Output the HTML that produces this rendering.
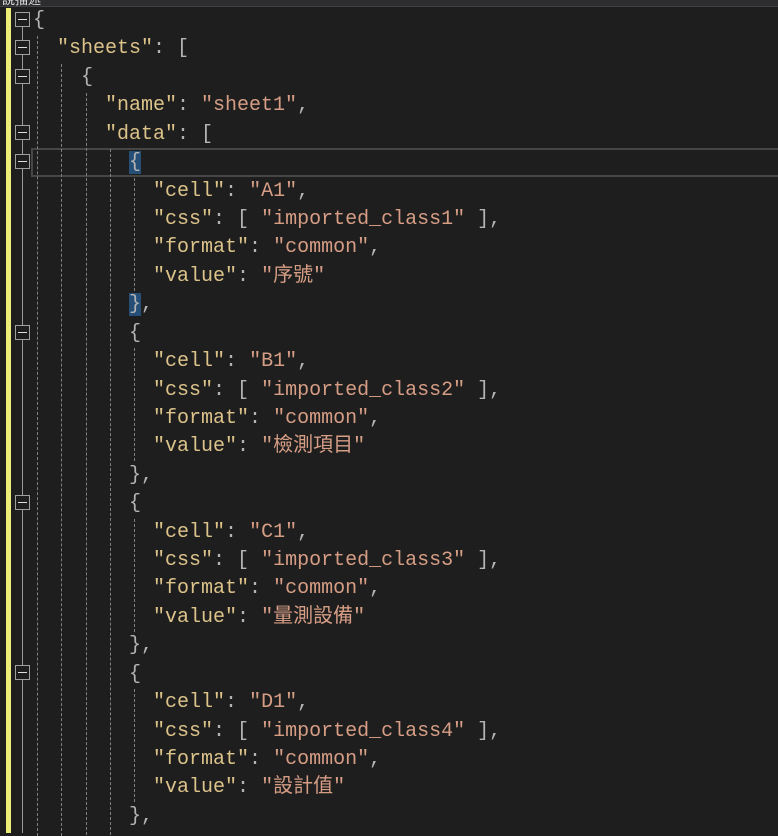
<!DOCTYPE html>
<html><head><meta charset="utf-8"><style>
body{margin:0;width:778px;height:833px;background:#1e1e1e;overflow:hidden;position:relative;font-family:"Liberation Mono","Noto Sans CJK TC",monospace;}
.top{position:absolute;left:0;top:0;width:778px;height:6px;background:#2d2d30;border-bottom:1px solid #3f3f46;overflow:hidden}
.top span{position:absolute;left:2px;top:-11px;color:#ddd;font-size:13px;font-family:"Liberation Sans","Noto Sans CJK TC",sans-serif}
.bar{position:absolute;left:6px;top:8px;width:5px;height:825px;background:#eded7a}
.ln{position:absolute;left:33px;height:28.42px;line-height:28.42px;font-size:20px;white-space:pre;color:#b4b4b4}
.k{color:#dcc38a}.s{color:#d69d85}.b{background:#264f78}
.fold{position:absolute;left:15px;width:13px;height:13px;border:1px solid #a0a0a0;background:#1e1e1e}
.fold:after{content:"";position:absolute;left:2px;top:6px;width:9px;height:1px;background:#ddd}
.vl{position:absolute;left:22px;width:1px;background:#999;top:14px;height:819px}
.g{position:absolute;width:0;border-left:1px dashed #808080}
.cur{position:absolute;left:31px;top:148px;width:760px;height:25px;border:2px solid #464646}
</style></head><body>
<div class="top"><span>說描述</span></div>
<div class="bar"></div>
<div class="vl"></div>
<div class="cur"></div>
<div class="g" style="left:37px;top:36px;height:800px"></div>
<div class="g" style="left:61px;top:64px;height:772px"></div>
<div class="g" style="left:86px;top:93px;height:742px"></div>
<div class="g" style="left:110px;top:149px;height:686px"></div>
<div class="g" style="left:134px;top:178px;height:113px"></div>
<div class="g" style="left:134px;top:348px;height:113px"></div>
<div class="g" style="left:134px;top:519px;height:113px"></div>
<div class="g" style="left:134px;top:689px;height:113px"></div>
<div class="fold" style="top:12px"></div>
<div class="fold" style="top:40px"></div>
<div class="fold" style="top:69px"></div>
<div class="fold" style="top:125px"></div>
<div class="fold" style="top:154px"></div>
<div class="fold" style="top:325px"></div>
<div class="fold" style="top:495px"></div>
<div class="fold" style="top:665px"></div>
<div class="ln" style="top:7px">{</div>
<div class="ln" style="top:35.4px">  <span class="k">"sheets"</span>: [</div>
<div class="ln" style="top:63.8px">    {</div>
<div class="ln" style="top:92.3px">      <span class="k">"name"</span>: <span class="s">"sheet1"</span>,</div>
<div class="ln" style="top:120.7px">      <span class="k">"data"</span>: [</div>
<div class="ln" style="top:149.1px">        <span class="b">{</span></div>
<div class="ln" style="top:177.5px">          <span class="k">"cell"</span>: <span class="s">"A1"</span>,</div>
<div class="ln" style="top:205.9px">          <span class="k">"css"</span>: [ <span class="s">"imported_class1"</span> ],</div>
<div class="ln" style="top:234.4px">          <span class="k">"format"</span>: <span class="s">"common"</span>,</div>
<div class="ln" style="top:262.8px">          <span class="k">"value"</span>: <span class="s">"序號"</span></div>
<div class="ln" style="top:291.2px">        <span class="b">}</span>,</div>
<div class="ln" style="top:319.6px">        {</div>
<div class="ln" style="top:348px">          <span class="k">"cell"</span>: <span class="s">"B1"</span>,</div>
<div class="ln" style="top:376.5px">          <span class="k">"css"</span>: [ <span class="s">"imported_class2"</span> ],</div>
<div class="ln" style="top:404.9px">          <span class="k">"format"</span>: <span class="s">"common"</span>,</div>
<div class="ln" style="top:433.3px">          <span class="k">"value"</span>: <span class="s">"檢測項目"</span></div>
<div class="ln" style="top:461.7px">        },</div>
<div class="ln" style="top:490.1px">        {</div>
<div class="ln" style="top:518.6px">          <span class="k">"cell"</span>: <span class="s">"C1"</span>,</div>
<div class="ln" style="top:547px">          <span class="k">"css"</span>: [ <span class="s">"imported_class3"</span> ],</div>
<div class="ln" style="top:575.4px">          <span class="k">"format"</span>: <span class="s">"common"</span>,</div>
<div class="ln" style="top:603.8px">          <span class="k">"value"</span>: <span class="s">"量測設備"</span></div>
<div class="ln" style="top:632.2px">        },</div>
<div class="ln" style="top:660.7px">        {</div>
<div class="ln" style="top:689.1px">          <span class="k">"cell"</span>: <span class="s">"D1"</span>,</div>
<div class="ln" style="top:717.5px">          <span class="k">"css"</span>: [ <span class="s">"imported_class4"</span> ],</div>
<div class="ln" style="top:745.9px">          <span class="k">"format"</span>: <span class="s">"common"</span>,</div>
<div class="ln" style="top:774.3px">          <span class="k">"value"</span>: <span class="s">"設計值"</span></div>
<div class="ln" style="top:802.8px">        },</div>
</body></html>
